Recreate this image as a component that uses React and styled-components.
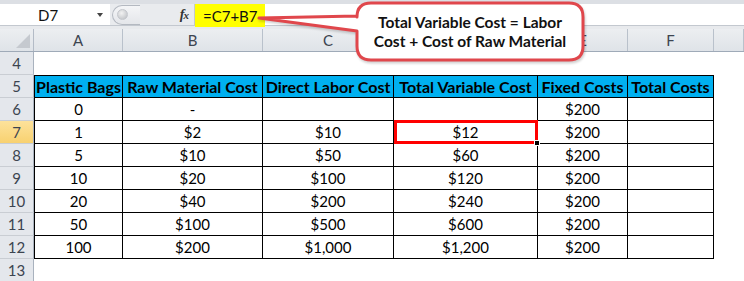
import React from 'react';
import styled, { createGlobalStyle } from 'styled-components';

const COLS = '34px 89px 140px 131px 144px 90px 86px 1fr';

const GlobalStyle = createGlobalStyle`
  html, body {
    margin: 0;
    padding: 0;
    background: #fff;
  }
  body {
    font-family: Lato, 'Open Sans', sans-serif;
    overflow: hidden;
  }
`;

const Page = styled.div`
  position: relative;
  width: 744px;
  height: 281px;
  overflow: hidden;
  background: #fff;
`;

const TopStrip = styled.div`
  height: 4px;
  background: #dcdfe4;
`;

const FormulaBar = styled.div`
  display: flex;
  height: 21px;
  border-bottom: 1px solid #c3c8cf;
  background: #e9ebee;
`;

const NameBox = styled.div`
  display: flex;
  align-items: center;
  width: 110px;
  padding-left: 38px;
  box-sizing: border-box;
  background: #fff;
  font-size: 15px;
  color: #111;
`;

const NameText = styled.span`
  flex: 1;
`;

const DropArrow = styled.span`
  width: 0;
  height: 0;
  margin-right: 7px;
  border-left: 3.5px solid transparent;
  border-right: 3.5px solid transparent;
  border-top: 4px solid #444;
`;

const FnArea = styled.div`
  display: flex;
  align-items: center;
  width: 84px;
  box-sizing: border-box;
  padding-left: 2px;
`;

const Pill = styled.div`
  display: flex;
  align-items: center;
  height: 20px;
  width: 28px;
  box-sizing: border-box;
  border: 1px solid #b4b9c1;
  border-right: none;
  border-radius: 11px 0 0 11px;
  background: linear-gradient(#f4f5f7, #e4e6ea);
  padding-left: 4px;
`;

const Knob = styled.span`
  width: 9px;
  height: 9px;
  border-radius: 50%;
  background: radial-gradient(circle at 40% 35%, #f2f2f2, #b9bcc1);
  border: 1px solid #c4c7cc;
`;

const Fx = styled.span`
  margin-left: auto;
  margin-right: 6px;
  font-family: 'Liberation Serif', serif;
  font-style: italic;
  font-weight: bold;
  font-size: 14px;
  color: #333;
  letter-spacing: -1px;
`;

const FxSub = styled.span`
  font-size: 11px;
`;

const FormulaInput = styled.div`
  flex: 1;
  display: flex;
  background: #fff;
  border-left: 1px solid #c3c8cf;
`;

const Highlight = styled.span`
  display: flex;
  align-items: center;
  height: 23px;
  padding: 0 7px 0 8px;
  background: #ffff00;
  font-size: 15px;
  color: #111;
  position: relative;
  z-index: 1;
`;

const BarGap = styled.div`
  height: 3px;
  background: #e8eaed;
`;

const HeaderRow = styled.div`
  display: grid;
  grid-template-columns: ${COLS};
  height: 23px;
  background: linear-gradient(#eceef1, #dfe3e8);
  border-bottom: 1px solid #9faab8;
  box-sizing: border-box;
`;

const Corner = styled.div`
  position: relative;
  border-right: 1px solid #b3bbc6;
  &::after {
    content: '';
    position: absolute;
    right: 3px;
    bottom: 3px;
    border-left: 14px solid transparent;
    border-bottom: 14px solid #c5c9cf;
  }
`;

const ColHead = styled.div`
  display: flex;
  align-items: center;
  justify-content: center;
  font-size: 15px;
  color: #3c4450;
  border-right: 1px solid #b9c1cb;
  background: ${(p) => (p.$active ? 'linear-gradient(#fde29b, #f8d170)' : 'transparent')};
`;

const Row = styled.div`
  display: grid;
  grid-template-columns: ${COLS};
  height: 23px;
`;

const RowHead = styled.div`
  display: flex;
  align-items: center;
  justify-content: center;
  font-size: 15px;
  color: #3c4450;
  box-sizing: border-box;
  border-right: 1px solid #a9b2be;
  border-bottom: 1px solid #c9cdd3;
  background: ${(p) => (p.$active ? 'linear-gradient(#fde29b, #f8d170)' : '#e4e7ec')};
`;

const Cell = styled.div`
  position: relative;
  display: flex;
  align-items: center;
  justify-content: center;
  box-sizing: border-box;
  color: #000;
  white-space: nowrap;
  font-weight: ${(p) => (p.$head ? 700 : 400)};
  font-size: ${(p) => (p.$head ? '16px' : '15px')};
  background: ${(p) => (p.$head ? '#00b0f0' : '#fff')};
  border-right: ${(p) => (p.$table ? '1px solid #000' : 'none')};
  border-bottom: ${(p) => (p.$table ? '1px solid #000' : 'none')};
  border-left: ${(p) => (p.$left ? '1px solid #000' : 'none')};
  border-top: ${(p) => (p.$top ? '1px solid #000' : 'none')};
  z-index: ${(p) => (p.$selected ? 2 : 'auto')};

  ${(p) =>
    p.$selected &&
    `
    &::before {
      content: '';
      position: absolute;
      top: -1px;
      left: 0;
      right: -1px;
      bottom: -1px;
      border: 3px solid #f00;
    }
    &::after {
      content: '';
      position: absolute;
      right: -3px;
      bottom: -3px;
      width: 4px;
      height: 4px;
      background: #000;
      border: 1px solid #fff;
    }
  `}
`;

const Callout = styled.div`
  position: absolute;
  left: 255px;
  top: 0;
  width: 335px;
  height: 64px;
  padding: 3px 0 0 102px;
  box-sizing: border-box;
  z-index: 5;
`;

const CalloutShape = styled.svg`
  position: absolute;
  left: 0;
  top: 0;
  filter: drop-shadow(1px 2px 1px rgba(0, 0, 0, 0.18));
`;

const CalloutText = styled.div`
  position: relative;
  display: flex;
  flex-direction: column;
  align-items: center;
  justify-content: center;
  gap: 1px;
  width: 226px;
  height: 57px;
  font-weight: 700;
  font-size: 15.5px;
  line-height: 18px;
  color: #111;
`;

const headers = ['Plastic Bags', 'Raw Material Cost', 'Direct Labor Cost', 'Total Variable Cost', 'Fixed Costs', 'Total Costs'];

const data = [
  [6, '0', '-', '', '', '$200', ''],
  [7, '1', '$2', '$10', '$12', '$200', ''],
  [8, '5', '$10', '$50', '$60', '$200', ''],
  [9, '10', '$20', '$100', '$120', '$200', ''],
  [10, '20', '$40', '$200', '$240', '$200', ''],
  [11, '50', '$100', '$500', '$600', '$200', ''],
  [12, '100', '$200', '$1,000', '$1,200', '$200', ''],
];

// column D's letter sits under the callout, so it is left blank
const letters = ['A', 'B', 'C', '', 'E', 'F', ''];

const EmptyRow = ({ n }) => (
  <Row>
    <RowHead>{n}</RowHead>
  </Row>
);

export default function App() {
  return (
    <Page>
      <GlobalStyle />
      <TopStrip />
      <FormulaBar>
        <NameBox>
          <NameText>D7</NameText>
          <DropArrow />
        </NameBox>
        <FnArea>
          <Pill>
            <Knob />
          </Pill>
          <Fx>
            f<FxSub>x</FxSub>
          </Fx>
        </FnArea>
        <FormulaInput>
          <Highlight>=C7+B7</Highlight>
        </FormulaInput>
      </FormulaBar>
      <BarGap />

      <HeaderRow>
        <Corner />
        {letters.map((l, i) => (
          <ColHead key={i} $active={i === 3}>
            {l}
          </ColHead>
        ))}
      </HeaderRow>

      <EmptyRow n={4} />

      <Row>
        <RowHead>5</RowHead>
        {headers.map((h, i) => (
          <Cell key={h} $table $head $top $left={i === 0}>
            {h}
          </Cell>
        ))}
      </Row>

      {data.map(([n, ...vals]) => (
        <Row key={n}>
          <RowHead $active={n === 7}>{n}</RowHead>
          {vals.map((v, i) => (
            <Cell key={i} $table $left={i === 0} $selected={n === 7 && i === 3}>
              {v}
            </Cell>
          ))}
        </Row>
      ))}

      <EmptyRow n={13} />

      <Callout>
        <CalloutShape width="335" height="64" viewBox="0 0 335 64">
          <path
            d="M116 3 H314 Q328 3 328 17 V46 Q328 60 314 60 H116 Q102 60 102 46 V31 L4 18 L102 16 V17 Q102 3 116 3 Z"
            fill="#fff"
            stroke="#e0474c"
            strokeWidth="3"
            strokeLinejoin="round"
          />
        </CalloutShape>
        <CalloutText>
          <span>Total Variable Cost = Labor</span>
          <span>Cost + Cost of Raw Material</span>
        </CalloutText>
      </Callout>
    </Page>
  );
}
